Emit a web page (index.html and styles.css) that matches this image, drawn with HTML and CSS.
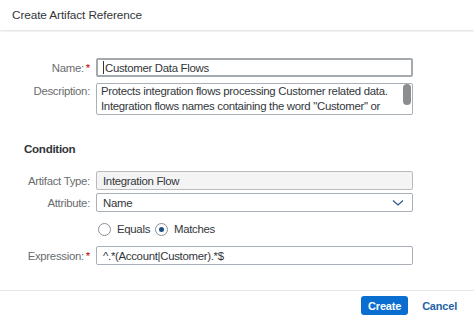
FILE: index.html
```html
<!DOCTYPE html>
<html lang="en">
<head>
    <meta charset="UTF-8">
    <title>Create Artifact Reference</title>
    <link rel="stylesheet" href="styles.css">
</head>
<body>
  <div class="dialog">
    <header class="dialog-header">Create Artifact Reference</header>

    <div class="dialog-content">
        <div class="form-row row-name">
            <label class="form-label">Name:<span class="req">*</span></label>
            <div class="field field-focus"><span class="caret"></span>Customer Data Flows</div>
        </div>
        <div class="form-row row-desc">
            <label class="form-label">Description:</label>
            <div class="field field-area">
                Protects integration flows processing Customer related data.<br>
                Integration flows names containing the word "Customer" or
                <span class="scroll-thumb"></span>
            </div>
        </div>

        <h3 class="section-title">Condition</h3>

        <div class="form-row row-type">
            <label class="form-label">Artifact Type:</label>
            <div class="field field-readonly">Integration Flow</div>
        </div>
        <div class="form-row row-attr">
            <label class="form-label">Attribute:</label>
            <div class="field field-select">
                <span>Name</span>
                <svg class="chevron" width="12" height="8" viewBox="0 0 12 8"><path d="M1 1.5 L6 6 L11 1.5" fill="none" stroke="#2f5c8a" stroke-width="1.3"/></svg>
            </div>
        </div>
        <div class="form-row row-radio">
            <span class="form-label"></span>
            <div class="radio-group">
                <span class="radio"></span><span class="radio-text">Equals</span>
                <span class="radio radio-on"></span><span class="radio-text">Matches</span>
            </div>
        </div>
        <div class="form-row row-expr">
            <label class="form-label">Expression:<span class="req">*</span></label>
            <div class="field">^.*(Account|Customer).*$</div>
        </div>
    </div>

    <footer class="dialog-footer">
        <button class="btn btn-primary">Create</button>
        <button class="btn btn-link">Cancel</button>
    </footer>
  </div>
</body>
</html>
```

FILE: styles.css
```css
body {
    margin: 0;
    background: #fff;
    font-family: "Liberation Sans", Arial, sans-serif;
    font-size: 11.4px;
    letter-spacing: -0.3px;
    color: #32363a;
}

.dialog {
    width: 474px;
    height: 320px;
    overflow: hidden;
}

.dialog-header {
    height: 30px;
    padding-left: 12px;
    display: flex;
    align-items: center;
    font-size: 11.8px;
    letter-spacing: -0.1px;
    color: #32363a;
    box-shadow: 0 1px 2px rgba(0,0,0,0.15);
}

.dialog-content {
    padding-top: 28px;
    height: 232px;
}

.form-row {
    display: flex;
    align-items: center;
}

.form-label {
    width: 96px;
    box-sizing: border-box;
    padding-right: 6px;
    text-align: right;
    color: #6a6d70;
}

.req {
    color: #bb0000;
    margin-left: 2px;
}

.field {
    position: relative;
    width: 317px;
    height: 19px;
    box-sizing: border-box;
    border: 1px solid #a9b0b7;
    border-radius: 2px;
    padding: 0 6px;
    display: flex;
    align-items: center;
    color: #32363a;
    background: #fff;
}

.field-focus {
    border: 2px solid #a4a9ae;
    padding-left: 5px;
}

.caret {
    width: 1px;
    height: 13px;
    background: #32363a;
    margin-right: 1px;
}

.row-desc { margin-top: 6px; align-items: flex-start; }
.row-desc .form-label { padding-top: 2px; }

.field-area {
    display: block;
    height: 32px;
    padding: 0 14px 0 4px;
    line-height: 15px;
    white-space: nowrap;
    overflow: hidden;
}

.scroll-thumb {
    position: absolute;
    right: 1px;
    top: 0;
    width: 8px;
    height: 21px;
    border-radius: 4px;
    background: #8b8e91;
}

.section-title {
    margin: 25px 0 0 24px;
    font-size: 11.6px;
    font-weight: bold;
    color: #32363a;
    height: 18px;
    line-height: 18px;
}

.row-type { margin-top: 13px; }

.field-readonly {
    background: #f4f4f4;
    border-color: #b9bcbf;
}

.row-attr { margin-top: 3px; }

.field-select {
    justify-content: space-between;
    padding-right: 8px;
}

.row-radio {
    margin-top: 6px;
    height: 22px;
}

.radio-group {
    display: flex;
    align-items: center;
    padding-left: 2px;
}

.radio {
    width: 11px;
    height: 11px;
    border: 1px solid #8b9096;
    border-radius: 50%;
    position: relative;
    margin-right: 6px;
}

.radio-on::after {
    content: "";
    position: absolute;
    left: 3px;
    top: 3px;
    width: 5px;
    height: 5px;
    border-radius: 50%;
    background: #1c4f86;
}

.radio-text {
    margin-right: 5px;
    color: #32363a;
}

.row-expr { margin-top: 6px; }

.dialog-footer {
    border-top: 1px solid #e8e8e8;
    height: 29px;
    display: flex;
    align-items: center;
    justify-content: flex-end;
    padding-right: 11px;
    gap: 8px;
}

.btn {
    font-family: "Liberation Sans", Arial, sans-serif;
    font-size: 11px;
    font-weight: bold;
    letter-spacing: -0.2px;
    height: 19px;
    border: none;
    border-radius: 3px;
    padding: 0 6px;
    cursor: pointer;
}

.btn-primary {
    background: #0a6ed1;
    color: #fff;
    width: 47px;
}

.btn-link {
    background: transparent;
    color: #2563a6;
}
```
